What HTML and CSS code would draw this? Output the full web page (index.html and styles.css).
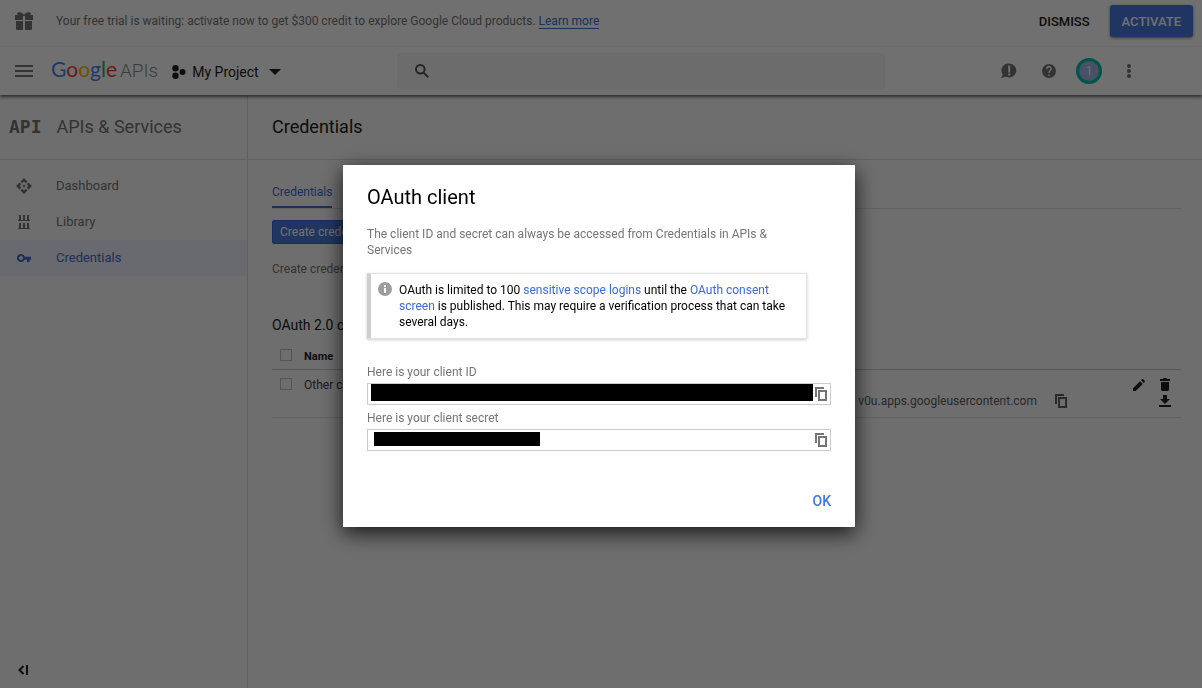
FILE: index.html
```html
<!DOCTYPE html>
<html lang="en">
<head>
    <meta charset="UTF-8">
    <meta name="viewport" content="width=device-width, initial-scale=1.0">
    <title>Credentials - My Project</title>
    <link rel="stylesheet" href="styles.css">
</head>
<body>
    <svg width="0" height="0" class="icon-defs" aria-hidden="true">
        <symbol id="icon-copy" viewBox="0 0 12 14">
            <path fill-rule="evenodd" d="M0 0h9v2H2v8H0zM3 3h9v11H3zM5 5v7h5V5z"/>
        </symbol>
    </svg>

    <div class="page">
        <div class="promo-bar">
            <svg class="promo-icon" width="18" height="19" viewBox="0 0 18 19">
                <path d="M9 3.2C7.500-.2 3-.3 1.800 1.600L3.200 3H0v5h8V4h2v4h8V3h-3.200l1.400-1.400C15-.3 10.500-.2 9 3.200zM1 9h7v9H2.500A1.500 1.500 0 0 1 1 16.500zM10 9h7v7.500a1.500 1.500 0 0 1-1.500 1.500H10z"/>
            </svg>
            <div class="promo-text">Your free trial is waiting: activate now to get $300 credit to explore Google Cloud products. <a href="#">Learn more</a></div>
            <button class="dismiss-btn">DISMISS</button>
            <button class="activate-btn">ACTIVATE</button>
        </div>

        <header class="header">
            <button class="icon-btn" aria-label="Main menu">
                <svg width="18" height="12" viewBox="0 0 18 12"><path d="M0 0h18v2H0zM0 5h18v2H0zM0 10h18v2H0z"/></svg>
            </button>
            <a class="logo" href="#"><span class="logo-google"><span class="blue">G</span><span class="red">o</span><span class="yellow">o</span><span class="blue">g</span><span class="green">l</span><span class="red">e</span></span><span class="logo-apis">APIs</span></a>
            <button class="project-btn">
                <svg width="14" height="14" viewBox="0 0 14 14"><circle cx="3.500" cy="3.300" r="3.200"/><circle cx="3.500" cy="10.700" r="3.200"/><circle cx="10.500" cy="7" r="3"/></svg>
                <span>My Project</span>
                <svg class="caret" width="12" height="6" viewBox="0 0 12 6"><path d="M0 0h12L6 6z"/></svg>
            </button>
            <label class="search">
                <svg class="stroked" width="14" height="14" viewBox="0 0 14 14"><circle cx="5.300" cy="5.300" r="4.300"/><path d="M8.400 8.400l4.800 4.800"/></svg>
                <input type="text" aria-label="Search">
            </label>
            <div class="header-tools">
                <button class="icon-btn" aria-label="Send feedback">
                    <svg width="16" height="16" viewBox="0 0 16 16"><path fill-rule="evenodd" d="M8.500.5a7 7 0 1 1-3.300 13.300L0 15l1.800-3.500A7 7 0 0 1 8.500.5zM7.200 2.500v7h2v-7zm0 8v2h2v-2z"/></svg>
                </button>
                <button class="icon-btn" aria-label="Help">
                    <svg width="14" height="14" viewBox="2 2 20 20"><path d="M12 2a10 10 0 1 0 0 20 10 10 0 0 0 0-20zm1 17h-2v-2h2zm2.070-7.750l-.9.920C13.450 12.900 13 13.500 13 15h-2v-.5c0-1.100.45-2.100 1.170-2.830l1.240-1.260A2 2 0 1 0 10 9H8a4 4 0 1 1 7.070 2.250z"/></svg>
                </button>
                <button class="avatar" aria-label="Account">1</button>
                <button class="icon-btn" aria-label="More">
                    <svg width="4" height="14" viewBox="0 0 4 14"><circle cx="2" cy="2" r="2"/><circle cx="2" cy="7" r="2"/><circle cx="2" cy="12" r="2"/></svg>
                </button>
            </div>
        </header>

        <div class="body">
            <nav class="sidebar">
                <div class="sidebar-title"><span class="api-icon">API</span><span>APIs &amp; Services</span></div>
                <div class="nav-list">
                    <a class="nav-item" href="#">
                        <svg width="16" height="16" viewBox="0 0 16 16"><path d="M8 0l3.500 3.500-1.800 1.800L8 3.600 6.300 5.300 4.500 3.500zM8 16l3.500-3.500-1.800-1.800L8 12.400l-1.700-1.700-1.800 1.800zM0 8l3.500-3.500 1.800 1.800L3.600 8l1.700 1.700-1.800 1.800zM16 8l-3.500-3.500-1.800 1.800L12.400 8l-1.700 1.700 1.800 1.800z"/><circle cx="8" cy="8" r="1.300"/></svg>
                        <span>Dashboard</span>
                    </a>
                    <a class="nav-item" href="#">
                        <svg width="16" height="16" viewBox="0 0 16 16"><path d="M3 1h2v5H3zM7 1h2v5H7zM11 1h2v5h-2zM2 6h12v1H2zM3 9h2v5H3zM7 9h2v5H7zM11 9h2v5h-2zM2 14h12v1H2z"/></svg>
                        <span>Library</span>
                    </a>
                    <a class="nav-item active" href="#">
                        <svg width="16" height="16" viewBox="0 0 16 16"><path fill-rule="evenodd" d="M5 4a4 4 0 0 1 3.800 2.700H15v3h-1.300V12H11V9.700H8.600A4 4 0 1 1 5 4zm0 2a2 2 0 1 0 0 4 2 2 0 0 0 0-4z"/></svg>
                        <span>Credentials</span>
                    </a>
                </div>
                <button class="collapse-btn" aria-label="Collapse menu">
                    <svg class="stroked" width="10" height="10" viewBox="0 0 10 10"><path d="M5.500 1l-4 4 4 4M9 0v10"/></svg>
                </button>
            </nav>

            <main class="content">
                <h1 class="content-title">Credentials</h1>
                <div class="content-body">
                    <div class="tabs">
                        <a class="tab active" href="#">Credentials</a>
                    </div>
                    <button class="create-btn">Create credentials</button>
                    <p class="hint">Create credentials to access your enabled APIs.</p>

                    <h2 class="table-title">OAuth 2.0 client IDs</h2>
                    <table class="clients">
                        <thead>
                            <tr>
                                <th class="col-check"><input type="checkbox" aria-label="Select all"></th>
                                <th class="col-name">Name</th>
                                <th></th>
                                <th class="col-actions"></th>
                            </tr>
                        </thead>
                        <tbody>
                            <tr>
                                <td class="col-check"><input type="checkbox" aria-label="Select client"></td>
                                <td>Other client</td>
                                <td>
                                    <div class="client-id">
                                        <span>v0u.apps.googleusercontent.com</span>
                                        <button class="icon-btn" aria-label="Copy"><svg width="12" height="14"><use href="#icon-copy"/></svg></button>
                                    </div>
                                </td>
                                <td class="col-actions">
                                    <div class="actions">
                                        <button class="icon-btn" aria-label="Edit"><svg width="14" height="14" viewBox="0 0 14 14"><path d="M1 10.300V13h2.700l7.100-7.100-2.700-2.700zM9 2.300L11.700 5l1-1a1 1 0 0 0 0-1.300L11.300 1.300a1 1 0 0 0-1.300 0z"/></svg></button>
                                        <button class="icon-btn" aria-label="Delete"><svg width="14" height="14" viewBox="0 0 14 14"><path d="M3 4h8v7.500A1.500 1.500 0 0 1 9.500 13h-5A1.500 1.500 0 0 1 3 11.500zM2 1h3l.5-1h3L9 1h3v2H2z"/></svg></button>
                                        <button class="icon-btn download" aria-label="Download"><svg width="14" height="14" viewBox="0 0 14 14"><path d="M5 1h4v4h3L7 10 2 5h3zM1 11h12v2H1z"/></svg></button>
                                    </div>
                                </td>
                            </tr>
                        </tbody>
                    </table>
                </div>
            </main>
        </div>
    </div>

    <div class="overlay">
        <div class="modal" role="dialog" aria-labelledby="modal-title">
            <h2 class="modal-title" id="modal-title">OAuth client</h2>
            <p class="modal-text">The client ID and secret can always be accessed from Credentials in APIs &amp; Services</p>
            <div class="notice">
                <svg class="notice-icon" width="14" height="14" viewBox="0 0 14 14"><circle cx="7" cy="7" r="7"/><path d="M6 3h2v2H6zM6 6h2v5H6z" fill="#fff"/></svg>
                <div>OAuth is limited to 100 <a href="#">sensitive scope logins</a> until the <a href="#">OAuth consent screen</a> is published. This may require a verification process that can take several days.</div>
            </div>
            <label class="field-label" for="client-id">Here is your client ID</label>
            <div class="field">
                <input type="text" id="client-id" readonly>
                <span class="mask mask-id"></span>
                <button class="icon-btn" aria-label="Copy client ID"><svg width="12" height="14"><use href="#icon-copy"/></svg></button>
            </div>
            <label class="field-label" for="client-secret">Here is your client secret</label>
            <div class="field">
                <input type="text" id="client-secret" readonly>
                <span class="mask mask-secret"></span>
                <button class="icon-btn" aria-label="Copy client secret"><svg width="12" height="14"><use href="#icon-copy"/></svg></button>
            </div>
            <div class="modal-actions">
                <button class="ok-btn">OK</button>
            </div>
        </div>
    </div>
</body>
</html>
```
FILE: styles.css
```css
* {
    box-sizing: border-box;
}
body {
    margin: 0;
    font-family: Roboto, Arial, sans-serif;
    font-size: 12px;
    line-height: 16px;
    color: #757575;
    background-color: #fff;
}
a {
    color: #446bc8;
    text-decoration: none;
}
button {
    font-family: inherit;
    border: none;
    background: none;
    padding: 0;
    color: inherit;
    cursor: pointer;
}
svg {
    display: block;
    fill: currentColor;
    flex-shrink: 0;
}
.stroked {
    fill: none;
    stroke: currentColor;
    stroke-width: 2;
}
h1, h2, p {
    margin: 0;
    font-weight: normal;
}
.icon-defs {
    position: absolute;
}
.icon-btn {
    display: flex;
    align-items: center;
    justify-content: center;
}
.page {
    display: flex;
    flex-direction: column;
    min-height: 100vh;
}

/* promo bar */
.promo-bar {
    display: flex;
    align-items: center;
    height: 46px;
    padding: 0 9px 4px 15px;
}
.promo-text {
    flex: 1;
    margin-left: 23px;
}
.promo-text a {
    border-bottom: 1px solid #446bc8;
}
.dismiss-btn,
.activate-btn {
    height: 32px;
    font-size: 13px;
    font-weight: 500;
}
.dismiss-btn {
    margin-right: 20px;
    color: #212121;
}
.activate-btn {
    padding: 0 12px;
    color: #fff;
    background-color: #4a7ae0;
    border-radius: 3px;
    box-shadow: 0 1px 3px rgba(0, 0, 0, 0.5);
}

/* header */
.header {
    display: flex;
    align-items: center;
    height: 49px;
    padding: 0 60px 0 15px;
    position: relative;
    box-shadow: 0 2px 3px rgba(0, 0, 0, 0.6);
    border-top: 1px solid #f4f4f4;
    clip-path: inset(0 0 -8px 0);
}
.logo {
    display: flex;
    align-items: baseline;
    gap: 3px;
    margin-left: 18px;
    padding-bottom: 2px;
    line-height: 24px;
}
.logo-google {
    font-family: Lato, sans-serif;
    font-size: 21px;
}
.logo-apis {
    font-size: 19px;
    font-weight: 300;
    color: #8a8a8a;
}
.blue {
    color: #4285f4;
}
.red {
    color: #ea4335;
}
.yellow {
    color: #fbbc05;
}
.green {
    color: #34a853;
}
.project-btn {
    display: flex;
    align-items: center;
    gap: 6px;
    margin-left: 14px;
    padding-top: 2px;
    font-size: 14px;
    color: #212121;
}
.caret {
    margin-left: 4px;
}
.search {
    display: flex;
    align-items: center;
    flex: 0 1 488px;
    height: 36px;
    margin-left: 116px;
    padding: 0 18px;
    color: #555;
    background-color: #f5f5f5;
    border-radius: 3px;
}
.search input {
    flex: 1;
    min-width: 0;
    margin-left: 12px;
    border: none;
    background: none;
    outline: none;
}
.header-tools {
    display: flex;
    align-items: center;
    gap: 14px;
    margin-left: auto;
}
.header-tools .icon-btn,
.avatar {
    width: 26px;
    height: 26px;
}
.avatar {
    border: 3px solid #00bfa5;
    border-radius: 50%;
    background-color: #a5b8e8;
    color: #fff;
    font-size: 12px;
}

/* sidebar */
.body {
    display: flex;
    flex: 1;
}
.sidebar {
    display: flex;
    flex-direction: column;
    width: 248px;
    flex-shrink: 0;
    border-right: 1px solid #dcdcdc;
    background-color: #fafafa;
}
.sidebar-title {
    display: flex;
    align-items: center;
    gap: 15px;
    height: 65px;
    padding: 0 0 1px 9px;
    border-bottom: 1px solid #dcdcdc;
    font-size: 18px;
}
.api-icon {
    font-family: "DejaVu Sans Mono", monospace;
    font-weight: bold;
}
.nav-list {
    flex: 1;
    padding-top: 8px;
}
.nav-item {
    display: flex;
    align-items: center;
    gap: 24px;
    height: 36px;
    padding-left: 16px;
    font-size: 13px;
    color: #757575;
}
.nav-item.active {
    color: #446bc8;
    background-color: #edf1fc;
}
.collapse-btn {
    padding: 13px 18px;
    color: #212121;
}

/* content */
.content {
    flex: 1;
    min-width: 0;
    background-color: #fafafa;
}
.content-title {
    height: 65px;
    padding-left: 24px;
    border-bottom: 1px solid #dcdcdc;
    font-size: 18px;
    line-height: 64px;
    color: #212121;
}
.content-body {
    padding: 16px 21px 0 24px;
}
.tabs {
    display: flex;
    border-bottom: 1px solid #dcdcdc;
}
.tab {
    height: 32px;
    border-bottom: 2px solid #446bc8;
    line-height: 32px;
}
.create-btn {
    height: 24px;
    margin-top: 11px;
    padding: 0 7px;
    border: 1px solid #3367d6;
    border-radius: 2px;
    background-color: #4a7ae0;
    color: #fff;
    font-size: 12px;
}
.hint {
    margin-top: 17px;
}
.table-title {
    margin-top: 40px;
    font-size: 14px;
    color: #212121;
}
.clients {
    width: 100%;
    margin-top: 9px;
    border-collapse: collapse;
    color: #424242;
}
.clients th,
.clients td {
    padding: 0;
    text-align: left;
}
.clients th {
    height: 27px;
    font-size: 11px;
    color: #212121;
    border-bottom: 1px solid #c8c8c8;
}
.clients .col-name {
    padding-top: 3px;
}
.clients td {
    height: 48px;
    padding-top: 7px;
    vertical-align: top;
    border-bottom: 1px solid #dcdcdc;
}
.clients .col-check {
    width: 32px;
    padding-left: 8px;
}
.clients input {
    display: block;
    appearance: none;
    width: 12px;
    height: 12px;
    margin: 0;
    border: 1px solid #bdbdbd;
}
.clients td input {
    margin-top: 1px;
}
.client-id {
    display: flex;
    justify-content: flex-end;
    gap: 18px;
    padding: 16px 54px 0 0;
    color: #616161;
}
.clients .col-actions {
    width: 60px;
}
.actions {
    display: grid;
    grid-template-columns: 14px 14px;
    justify-content: end;
    column-gap: 12px;
    row-gap: 2px;
    padding: 1px 9px 0 0;
    color: #212121;
}
.download {
    grid-column: 2;
}

/* modal */
.overlay {
    position: fixed;
    inset: 0;
    display: flex;
    align-items: center;
    justify-content: center;
    padding: 4px 4px 0 0;
    background-color: rgba(0, 0, 0, 0.56);
}
.modal {
    width: 512px;
    padding: 20px 24px 8px;
    background-color: #fff;
    box-shadow: 0 6px 20px rgba(0, 0, 0, 0.8);
}
.modal-title {
    font-size: 20px;
    line-height: 24px;
    color: #000;
}
.modal-text {
    width: 440px;
    margin-top: 17px;
}
.notice {
    display: flex;
    gap: 7px;
    width: 440px;
    margin: 15px 0 25px;
    padding: 8px 12px 8px 7px;
    border: 1px solid #e4e4e4;
    border-left: 4px solid #cfcfcf;
    box-shadow: 0 1px 3px rgba(0, 0, 0, 0.2);
    color: #000;
}
.notice a {
    color: #3b69d6;
}
.notice-icon {
    color: #9e9e9e;
}
.field-label {
    display: block;
}
.field {
    display: flex;
    align-items: center;
    position: relative;
    margin: 3px 0 5px;
    height: 22px;
    padding-right: 3px;
    border: 1px solid #ccc;
}
.field input {
    flex: 1;
    min-width: 0;
    border: none;
    outline: none;
}
.mask {
    position: absolute;
    background-color: #000;
}
.mask-id {
    top: 0;
    left: 3px;
    width: 442px;
    height: 17px;
}
.mask-secret {
    top: 2px;
    left: 6px;
    width: 166px;
    height: 14px;
}
.modal-actions {
    display: flex;
    justify-content: flex-end;
    margin-top: 32px;
}
.ok-btn {
    height: 36px;
    font-size: 14px;
    font-weight: 500;
    color: #3b78e7;
}
```
